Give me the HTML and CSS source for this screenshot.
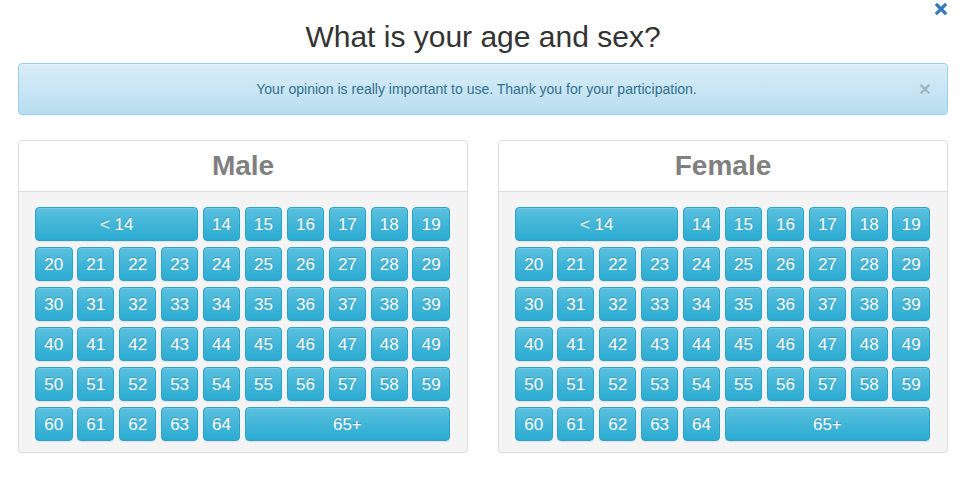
FILE: index.html
```html
<!DOCTYPE html>
<html>
<head>
<meta charset="utf-8">
<link rel="stylesheet" href="styles.css">
</head>
<body>
<div class="page">
  <button class="dismiss" aria-label="Close">
    <svg width="12" height="12" viewBox="0 0 12 12"><path d="M2 2 L10 10 M10 2 L2 10" stroke="#3479be" stroke-width="3.2" stroke-linecap="square"/></svg>
  </button>
  <h1 class="title">What is your age and sex?</h1>
  <div class="alert">
    <span class="alert-text">Your opinion is really important to use. Thank you for your participation.</span>
    <span class="alert-close">×</span>
  </div>
  <div class="panels">
    <div class="panel">
      <div class="panel-head">Male</div>
      <div class="panel-body">
        <div class="grid">
          <button class="btn span4">&lt; 14</button>
          <button class="btn">14</button><button class="btn">15</button><button class="btn">16</button><button class="btn">17</button><button class="btn">18</button><button class="btn">19</button>
          <button class="btn">20</button><button class="btn">21</button><button class="btn">22</button><button class="btn">23</button><button class="btn">24</button><button class="btn">25</button><button class="btn">26</button><button class="btn">27</button><button class="btn">28</button><button class="btn">29</button>
          <button class="btn">30</button><button class="btn">31</button><button class="btn">32</button><button class="btn">33</button><button class="btn">34</button><button class="btn">35</button><button class="btn">36</button><button class="btn">37</button><button class="btn">38</button><button class="btn">39</button>
          <button class="btn">40</button><button class="btn">41</button><button class="btn">42</button><button class="btn">43</button><button class="btn">44</button><button class="btn">45</button><button class="btn">46</button><button class="btn">47</button><button class="btn">48</button><button class="btn">49</button>
          <button class="btn">50</button><button class="btn">51</button><button class="btn">52</button><button class="btn">53</button><button class="btn">54</button><button class="btn">55</button><button class="btn">56</button><button class="btn">57</button><button class="btn">58</button><button class="btn">59</button>
          <button class="btn">60</button><button class="btn">61</button><button class="btn">62</button><button class="btn">63</button><button class="btn">64</button>
          <button class="btn span5">65+</button>
        </div>
      </div>
    </div>
    <div class="panel">
      <div class="panel-head">Female</div>
      <div class="panel-body">
        <div class="grid">
          <button class="btn span4">&lt; 14</button>
          <button class="btn">14</button><button class="btn">15</button><button class="btn">16</button><button class="btn">17</button><button class="btn">18</button><button class="btn">19</button>
          <button class="btn">20</button><button class="btn">21</button><button class="btn">22</button><button class="btn">23</button><button class="btn">24</button><button class="btn">25</button><button class="btn">26</button><button class="btn">27</button><button class="btn">28</button><button class="btn">29</button>
          <button class="btn">30</button><button class="btn">31</button><button class="btn">32</button><button class="btn">33</button><button class="btn">34</button><button class="btn">35</button><button class="btn">36</button><button class="btn">37</button><button class="btn">38</button><button class="btn">39</button>
          <button class="btn">40</button><button class="btn">41</button><button class="btn">42</button><button class="btn">43</button><button class="btn">44</button><button class="btn">45</button><button class="btn">46</button><button class="btn">47</button><button class="btn">48</button><button class="btn">49</button>
          <button class="btn">50</button><button class="btn">51</button><button class="btn">52</button><button class="btn">53</button><button class="btn">54</button><button class="btn">55</button><button class="btn">56</button><button class="btn">57</button><button class="btn">58</button><button class="btn">59</button>
          <button class="btn">60</button><button class="btn">61</button><button class="btn">62</button><button class="btn">63</button><button class="btn">64</button>
          <button class="btn span5">65+</button>
        </div>
      </div>
    </div>
  </div>
</div>
</body>
</html>
```

FILE: styles.css
```css
* { box-sizing: border-box; }
html, body { margin: 0; padding: 0; background: #fff; }
body {
  font-family: "Liberation Sans", Arial, sans-serif;
  color: #333;
}
.page {
  position: relative;
  width: 930px;
  margin: 0 0 0 18px;
  padding-top: 18px;
}
.dismiss {
  position: absolute;
  top: 3px;
  right: 1px;
  width: 12px;
  height: 12px;
  padding: 0;
  border: 0;
  background: none;
  display: block;
}
.dismiss svg { display: block; }
.title {
  margin: 0;
  font-size: 30px;
  font-weight: normal;
  line-height: 38px;
  text-align: center;
  color: #333;
}
.alert {
  position: relative;
  margin-top: 7px;
  height: 52px;
  border: 1px solid #9acfea;
  border-radius: 4px;
  background: linear-gradient(to bottom, #d9edf7 0%, #b9def0 100%);
  box-shadow: inset 0 1px 0 rgba(255,255,255,.25), 0 1px 2px rgba(0,0,0,.05);
  color: #31708f;
  font-size: 14px;
  display: flex;
  align-items: center;
  justify-content: center;
  padding: 0 28px 0 15px;
}
.alert-close {
  position: absolute;
  right: 16px;
  top: 14px;
  font-size: 21px;
  font-weight: bold;
  line-height: 1;
  color: #000;
  opacity: .2;
  text-shadow: 0 1px 0 #fff;
}
.panels {
  margin-top: 25px;
  display: grid;
  grid-template-columns: 450px 450px;
  column-gap: 30px;
}
.panel {
  border: 1px solid #ddd;
  border-radius: 4px;
  background: #f4f4f4;
  box-shadow: 0 1px 2px rgba(0,0,0,.06);
  overflow: hidden;
}
.panel-head {
  height: 51px;
  background: #fff;
  border-bottom: 1px solid #ddd;
  text-align: center;
  font-size: 28px;
  font-weight: bold;
  line-height: 50px;
  color: #808080;
}
.panel-body {
  padding: 15px 17px 11px 16px;
}
.grid {
  display: grid;
  grid-template-columns: repeat(10, 1fr);
  column-gap: 4.4px;
  row-gap: 6px;
}
.btn {
  height: 34px;
  padding: 0;
  margin: 0;
  border: 1px solid #28a4c9;
  border-radius: 4px;
  background: linear-gradient(to bottom, #5bc0de 0%, #2aabd2 100%);
  color: #fff;
  font-family: "Liberation Sans", Arial, sans-serif;
  font-size: 17px;
  line-height: 33px;
  text-shadow: 0 -1px 0 rgba(0,0,0,.2);
  box-shadow: inset 0 1px 0 rgba(255,255,255,.15), 0 1px 1px rgba(0,0,0,.075);
  text-align: center;
}
.span4 { grid-column: span 4; }
.span5 { grid-column: span 5; }
```
